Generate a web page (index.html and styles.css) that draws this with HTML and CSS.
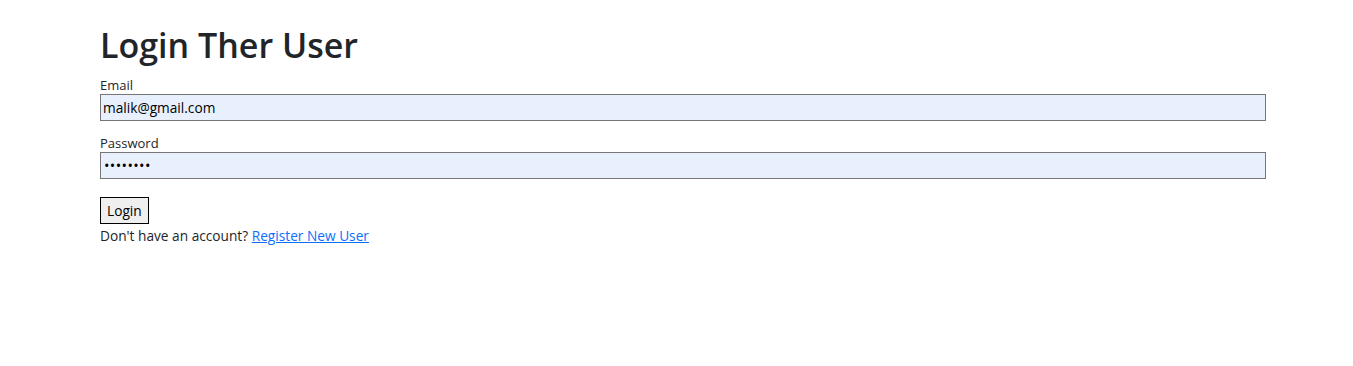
FILE: index.html
```html
<!DOCTYPE html>
<html>
<head>
<meta charset="utf-8">
<link rel="stylesheet" href="styles.css">
</head>
<body>
<div class="container">
  <h1 class="title">Login Ther User</h1>
  <form class="form">
    <div class="field">
      <label class="label">Email</label>
      <div class="input">malik@gmail.com</div>
    </div>
    <div class="field">
      <label class="label">Password</label>
      <div class="input password">••••••••</div>
    </div>
    <button type="button" class="btn">Login</button>
    <p class="note">Don't have an account? <a class="link" href="#">Register New User</a></p>
  </form>
</div>
</body>
</html>
```
FILE: styles.css
```css
html, body { margin: 0; padding: 0; background: #fff; }
body {
  font-family: "Open Sans", "Noto Sans", sans-serif;
  color: #212529;
  font-size: 14px;
}
.container {
  width: 1166px;
  margin-left: 100px;
  padding-top: 22px;
}
.title {
  margin: 0 0 8px 0;
  font-size: 34px;
  font-weight: 600;
  line-height: 46px;
  color: #212529;
}
.form { display: flex; flex-direction: column; align-items: flex-start; }
.field { width: 100%; }
.field + .field { margin-top: 13px; }
.label { display: block; font-size: 13px; line-height: 18px; }
.input {
  box-sizing: border-box;
  height: 27px;
  width: 100%;
  border: 1px solid #767676;
  background: #e8f0fe;
  color: #000;
  padding: 0 2px;
  line-height: 25px;
  font-size: 13.7px;
}
.password { letter-spacing: 0.4px; font-size: 14.5px; padding-left: 3px; }
.btn {
  margin-top: 18px;
  height: 27px;
  padding: 0 6px;
  border: 1px solid #000;
  background: #efefef;
  font-family: inherit;
  font-size: 13.7px;
  color: #000;
}
.note { margin: 2px 0 0 0; font-size: 13.7px; line-height: 20px; }
.link { color: #0d6efd; text-decoration: underline; }
```
